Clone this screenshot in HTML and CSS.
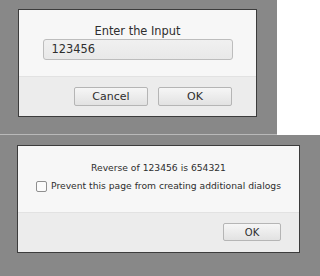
FILE: index.html
```html
<!DOCTYPE html>
<html lang="en">
<head>
    <meta charset="UTF-8">
    <title>Prompt and alert</title>
    <link rel="stylesheet" href="styles.css">
</head>
<body>
    <div class="panel panel-top">
        <div class="dialog dialog-prompt">
            <div class="dialog-body">
                <div class="dialog-title">Enter the Input</div>
                <div class="text-field">123456</div>
            </div>
            <div class="dialog-foot">
                <button class="btn">Cancel</button>
                <button class="btn">OK</button>
            </div>
        </div>
    </div>
    <div class="panel panel-bottom">
        <div class="dialog dialog-alert">
            <div class="dialog-body">
                <div class="alert-text">Reverse of 123456 is 654321</div>
                <label class="check-row">
                    <span class="check-box"></span>
                    <span>Prevent this page from creating additional dialogs</span>
                </label>
            </div>
            <div class="dialog-foot">
                <button class="btn btn-small">OK</button>
            </div>
        </div>
    </div>
</body>
</html>
```

FILE: styles.css
```css
html, body {
    margin: 0;
    height: 100%;
    overflow: hidden;
}
body {
    background-color: #ffffff;
    font-family: "DejaVu Sans", Verdana, sans-serif;
    color: #2e2e2e;
    display: flex;
    flex-direction: column;
}
.panel {
    background-color: #888888;
    box-sizing: border-box;
}
.panel-top {
    width: 277px;
    height: 135px;
    padding: 9px 0 0 18px;
    border-bottom: 1px solid #b9b9b9;
}
.panel-bottom {
    flex: 1;
    padding: 10px 0 0 17px;
}
.dialog {
    border: 1px solid #3c3c3c;
    background-color: #f7f7f7;
    display: flex;
    flex-direction: column;
}
.dialog-prompt {
    width: 237px;
}
.dialog-alert {
    width: 281px;
}
.dialog-body {
    height: 66px;
    box-sizing: border-box;
    display: flex;
    flex-direction: column;
    align-items: center;
}
.dialog-prompt .dialog-body {
    padding-top: 14px;
}
.dialog-alert .dialog-body {
    padding-top: 15px;
}
.dialog-title {
    font-size: 11.4px;
    line-height: 14px;
    margin-bottom: 1px;
}
.text-field {
    width: 190px;
    height: 21px;
    box-sizing: border-box;
    border: 1px solid #bdbdbd;
    border-radius: 3px;
    background: linear-gradient(#f0f0f0, #e9e9e9);
    font-size: 11.4px;
    line-height: 19px;
    padding-left: 8px;
}
.alert-text {
    font-size: 9.2px;
    line-height: 14px;
}
.check-row {
    display: flex;
    align-items: center;
    gap: 4px;
    font-size: 9.2px;
    line-height: 14px;
    margin-top: 4px;
}
.check-box {
    width: 9px;
    height: 9px;
    border: 1px solid #8f8f8f;
    border-radius: 2px;
    background-color: #fbfbfb;
}
.dialog-foot {
    height: 40px;
    box-sizing: border-box;
    background-color: #ececec;
    border-top: 1px solid #e2e2e2;
    display: flex;
    justify-content: flex-end;
    align-items: flex-start;
    gap: 10px;
    padding: 10px 24px 0 0;
}
.dialog-alert .dialog-foot {
    padding: 10px 18px 0 0;
}
.btn {
    width: 74px;
    height: 19px;
    border: 1px solid #b5b5b5;
    border-radius: 2px;
    background: linear-gradient(#f6f6f6, #e2e2e2);
    font-family: "DejaVu Sans", Verdana, sans-serif;
    font-size: 11px;
    color: #2e2e2e;
    padding: 0;
}
.btn-small {
    width: 58px;
    height: 18px;
    font-size: 10px;
}
```
